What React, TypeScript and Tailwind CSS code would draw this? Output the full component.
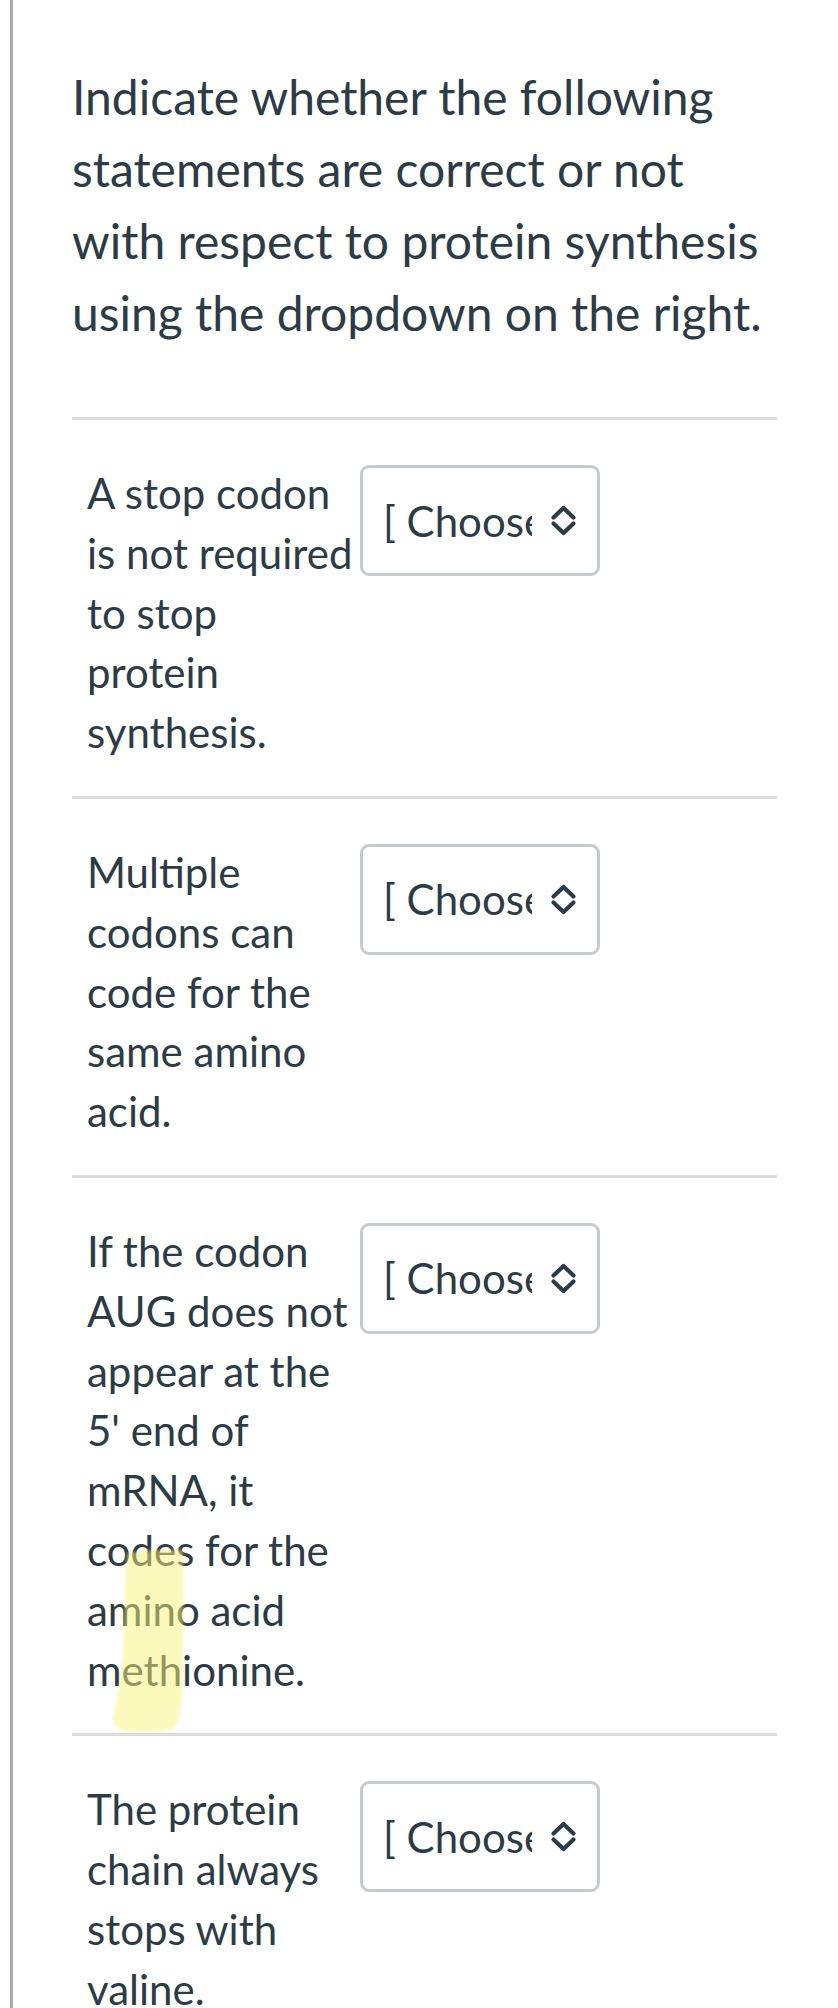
import React from "react";

const items: string[][] = [
  ["A stop codon", "is not required", "to stop", "protein", "synthesis."],
  ["Multiple", "codons can", "code for the", "same amino", "acid."],
  [
    "If the codon",
    "AUG does not",
    "appear at the",
    "5' end of",
    "mRNA, it",
    "codes for the",
    "amino acid",
    "methionine.",
  ],
  ["The protein", "chain always", "stops with", "valine."],
];

function Chevron() {
  return (
    <svg width="27" height="31" viewBox="0 0 27 31" fill="none" className="shrink-0">
      <path d="M3.5 12.5 L13.5 3 L23.5 12.5" stroke="#2d3b45" strokeWidth="4.2" strokeLinecap="round" strokeLinejoin="round" />
      <path d="M3.5 18.5 L13.5 28 L23.5 18.5" stroke="#2d3b45" strokeWidth="4.2" strokeLinecap="round" strokeLinejoin="round" />
    </svg>
  );
}

function Select() {
  return (
    <div className="flex h-[111px] w-[240px] shrink-0 items-center rounded-[9px] border-[3px] border-[#c7cbce] bg-white pl-[20px]">
      <span className="block w-[149px] overflow-hidden whitespace-nowrap text-[42px] leading-[50px]">[ Choose ]</span>
      <span className="ml-[18px] flex items-center">
        <Chevron />
      </span>
    </div>
  );
}

function Row({ lines }: { lines: string[] }) {
  return (
    <div className="flex items-start pt-[45px] pb-[33px] pl-[15px]">
      <div className="-mt-[1px] w-[273px] shrink-0 text-[42px] leading-[59.8px]">
        {lines.map((l, i) => (
          <div key={i} className="whitespace-nowrap">
            {l}
          </div>
        ))}
      </div>
      <Select />
    </div>
  );
}

export default function App() {
  return (
    <div className="relative h-[2008px] w-[838px] overflow-hidden bg-white font-['Lato',sans-serif] text-[#2d3b45]">
      <div className="h-full pl-[10px]">
        <div className="h-full border-l-[3px] border-[#ababab] pl-[59px]">
          <div className="w-[705px]">
            <div className="pt-[61px] pb-[68px] text-[48px] leading-[72px]">
              <div className="whitespace-nowrap">Indicate whether the following</div>
              <div className="whitespace-nowrap">statements are correct or not</div>
              <div className="whitespace-nowrap">with respect to protein synthesis</div>
              <div className="whitespace-nowrap">using the dropdown on the right.</div>
            </div>
            {items.map((lines, i) => (
              <div key={i}>
                <div className="h-[3px] bg-[#dcdcdc]" />
                <Row lines={lines} />
              </div>
            ))}
          </div>
        </div>
      </div>
      <svg
        className="pointer-events-none absolute left-[105px] top-[1545px]"
        width="85"
        height="195"
        viewBox="0 0 85 195"
      >
        <path
          d="M22 8 C40 5 62 4 78 5 C79 60 78 120 77 150 C76 170 73 180 67 184 C52 188 30 188 15 185 C9 182 7 177 9 170 C13 150 16 130 18 110 C19 75 20 40 22 8 Z"
          fill="rgb(248,244,120)"
          fillOpacity="0.5"
          style={{ filter: "blur(1.5px)" }}
        />
      </svg>
    </div>
  );
}
